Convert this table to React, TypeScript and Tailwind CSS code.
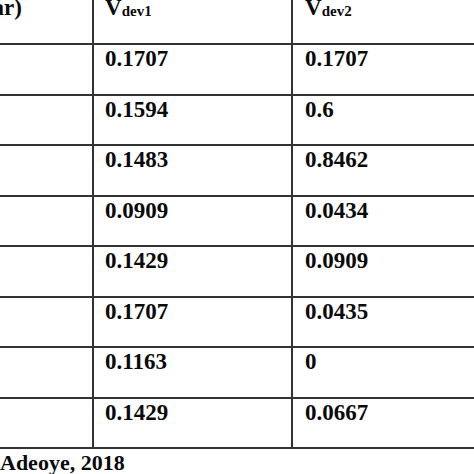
import React from "react"

const ROWS: [string, string][] = [
  ["0.1707", "0.1707"],
  ["0.1594", "0.6"],
  ["0.1483", "0.8462"],
  ["0.0909", "0.0434"],
  ["0.1429", "0.0909"],
  ["0.1707", "0.0435"],
  ["0.1163", "0"],
  ["0.1429", "0.0667"],
]

// alternating heights so the rules land on the half-pixel pitch of the scan
const HEIGHTS = ["h-[51px]", "h-[50px]"]

function Dev({ n }: { n: string }) {
  return (
    <span>
      V<span className="relative top-[1px] text-[15px]">dev{n}</span>
    </span>
  )
}

export default function App() {
  return (
    <div className="h-[474px] w-[474px] overflow-hidden bg-white font-['Liberation_Serif',serif] font-bold text-[#0a0a0a]">
      <div className="-ml-[39px] w-[540px]">
        {/* Header */}
        <div className="flex h-[45px] border-b-2 border-[#333] text-[23px] leading-[23px]">
          <div className="w-[133px] border-r-2 border-[#333] pl-[11px]">
            <div className="-mt-[4px]">(bar)</div>
          </div>
          <div className="w-[199px] border-r-2 border-[#333] pl-[11px]">
            <div className="-mt-[4px]">
              <Dev n="1" />
            </div>
          </div>
          <div className="flex-1 pl-[12px]">
            <div className="-mt-[4px]">
              <Dev n="2" />
            </div>
          </div>
        </div>

        {/* Rows */}
        {ROWS.map((r, i) => (
          <div
            key={i}
            className={`flex ${HEIGHTS[i % 2]} border-b-2 border-[#333] text-[23px] leading-[23px]`}
          >
            <div className="w-[133px] border-r-2 border-[#333]" />
            <div className="w-[199px] border-r-2 border-[#333] pl-[11px] pt-[2px]">{r[0]}</div>
            <div className="flex-1 pl-[12px] pt-[2px]">{r[1]}</div>
          </div>
        ))}
      </div>

      {/* Source */}
      <div className="mt-[3px] text-[22px] leading-[22px]">Adeoye, 2018</div>
    </div>
  )
}
